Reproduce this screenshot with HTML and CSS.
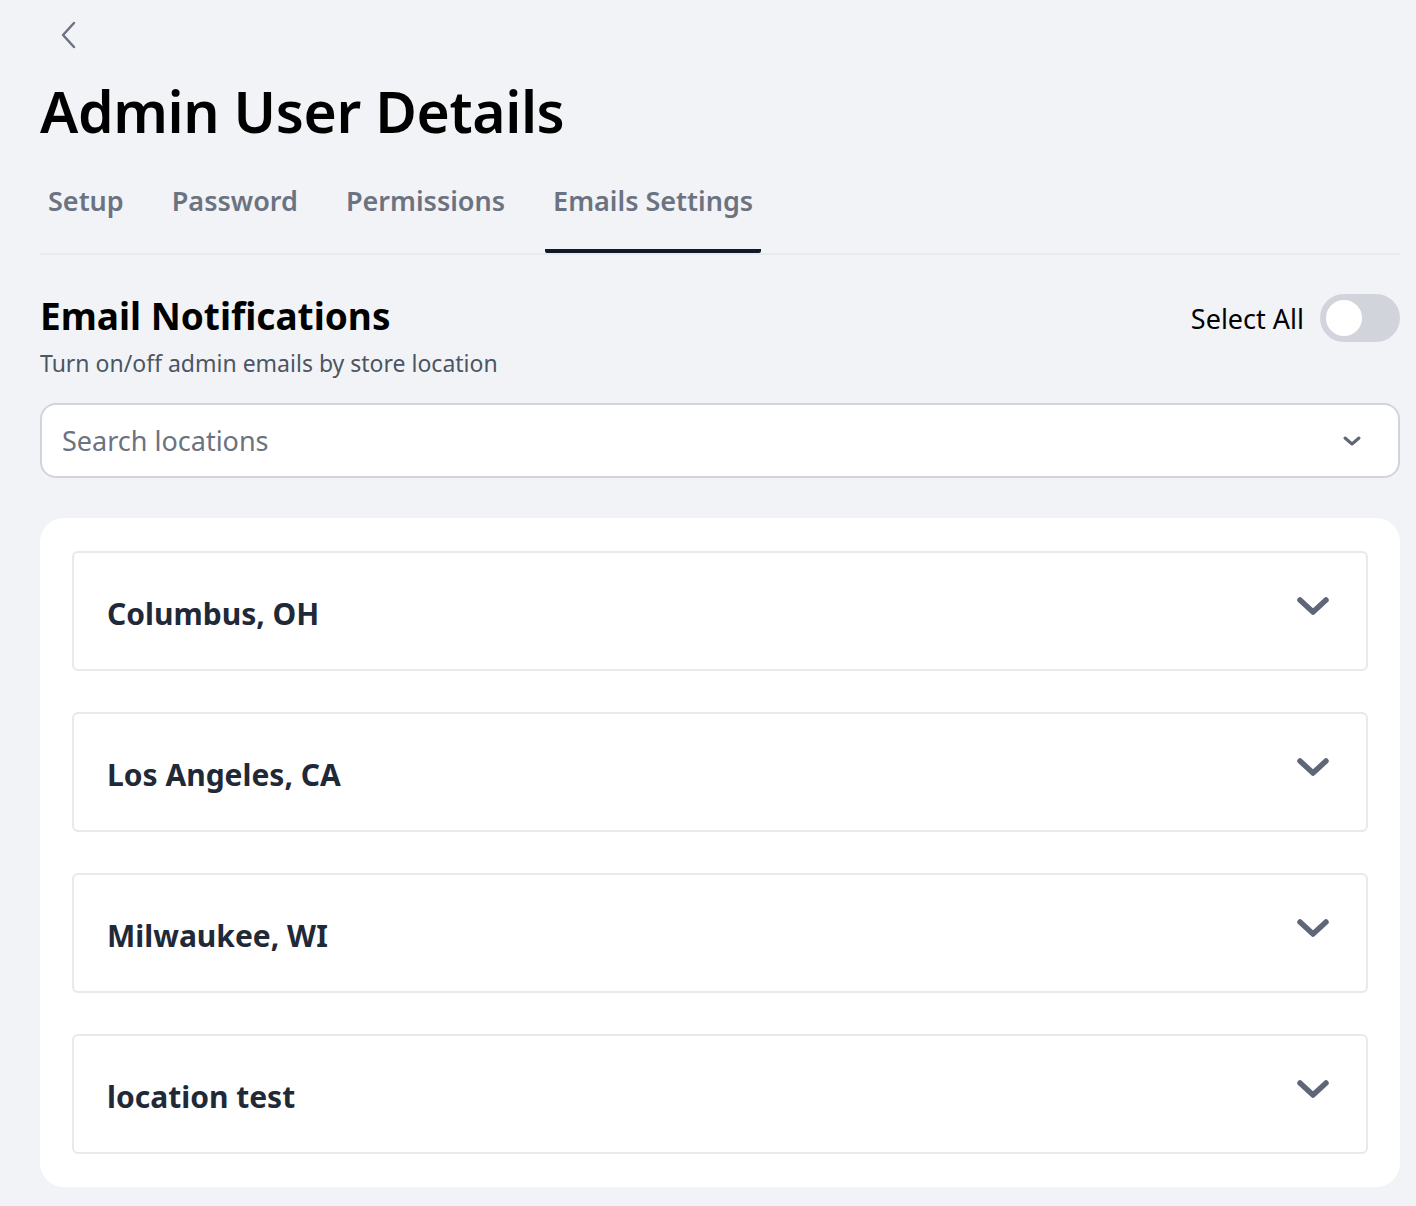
FILE: index.html
```html
<!DOCTYPE html>
<html lang="en">
<head>
    <meta charset="UTF-8">
    <meta name="viewport" content="width=device-width, initial-scale=1.0">
    <title>Admin User Details</title>
    <link rel="stylesheet" href="styles.css">
</head>
<body>
<div class="page">
    <button class="back-button" aria-label="Back">
        <svg width="22" height="32" viewBox="0 0 22 32" fill="none">
            <path d="M16 4 L5 16 L16 28" stroke="#6b7280" stroke-width="2.5" stroke-linecap="round" stroke-linejoin="round"/>
        </svg>
    </button>

    <h1 class="title">Admin User Details</h1>

    <nav class="tabs">
        <a class="tab">Setup</a>
        <a class="tab">Password</a>
        <a class="tab">Permissions</a>
        <a class="tab active">Emails Settings</a>
    </nav>

    <section class="section-header">
        <div>
            <h2 class="section-title">Email Notifications</h2>
            <p class="section-subtitle">Turn on/off admin emails by store location</p>
        </div>
        <label class="select-all">
            <span>Select All</span>
            <span class="toggle"><span class="knob"></span></span>
        </label>
    </section>

    <div class="search">
        <input type="text" placeholder="Search locations" spellcheck="false">
        <svg class="search-chevron" width="20" height="12" viewBox="0 0 20 12" fill="none">
            <path d="M3 3 L10 9 L17 3" stroke="#5f6678" stroke-width="3" stroke-linecap="round" stroke-linejoin="round"/>
        </svg>
    </div>

    <div class="locations">
        <div class="location">
            <span class="location-name">Columbus, OH</span>
            <svg class="location-chevron" width="34" height="22" viewBox="0 0 34 22" fill="none">
                <path d="M4 4 L17 16 L30 4" stroke="#5f6678" stroke-width="5.5" stroke-linecap="round" stroke-linejoin="round"/>
            </svg>
        </div>
        <div class="location">
            <span class="location-name">Los Angeles, CA</span>
            <svg class="location-chevron" width="34" height="22" viewBox="0 0 34 22" fill="none">
                <path d="M4 4 L17 16 L30 4" stroke="#5f6678" stroke-width="5.5" stroke-linecap="round" stroke-linejoin="round"/>
            </svg>
        </div>
        <div class="location">
            <span class="location-name">Milwaukee, WI</span>
            <svg class="location-chevron" width="34" height="22" viewBox="0 0 34 22" fill="none">
                <path d="M4 4 L17 16 L30 4" stroke="#5f6678" stroke-width="5.5" stroke-linecap="round" stroke-linejoin="round"/>
            </svg>
        </div>
        <div class="location">
            <span class="location-name">location test</span>
            <svg class="location-chevron" width="34" height="22" viewBox="0 0 34 22" fill="none">
                <path d="M4 4 L17 16 L30 4" stroke="#5f6678" stroke-width="5.5" stroke-linecap="round" stroke-linejoin="round"/>
            </svg>
        </div>
    </div>
</div>
</body>
</html>
```

FILE: styles.css
```css
:root {
    --background: #f2f3f7;
    --text: #000000;
    --text-dark: #1f2937;
    --tab-active: #111827;
    --text-secondary: #4b5563;
    --muted: #6b7280;
    --border: #e8e9ee;
    --border-strong: #d1d5db;
}

* {
    margin: 0;
    padding: 0;
    box-sizing: border-box;
}

body {
    font-family: "Noto Sans", "Open Sans", Arial, sans-serif;
    background-color: var(--background);
    color: var(--text);
}

.page {
    padding: 16px 16px 19px 40px;
}

.back-button {
    display: block;
    background: none;
    border: none;
    margin-left: 18px;
    height: 40px;
    cursor: pointer;
}

.title {
    font-size: 57px;
    font-weight: 600;
    line-height: 1;
    margin-top: 27px;
    letter-spacing: -0.4px;
}

.tabs {
    display: flex;
    gap: 32px;
    margin-top: 42px;
    border-bottom: 2px solid var(--border);
}

.tab {
    font-size: 27px;
    font-weight: 600;
    color: var(--muted);
    padding: 0 8px 30px;
    border-bottom: 4px solid transparent;
    cursor: pointer;
}

.tab.active {
    border-bottom-color: var(--tab-active);
    border-radius: 2px;
}

.section-header {
    display: flex;
    justify-content: space-between;
    align-items: flex-start;
    margin-top: 39px;
}

.section-title {
    font-size: 37px;
    font-weight: 700;
    line-height: 1.2;
}

.section-subtitle {
    font-size: 23px;
    color: var(--text-secondary);
    margin-top: 9px;
}

.select-all {
    display: flex;
    align-items: center;
    gap: 16px;
    font-size: 27px;
    cursor: pointer;
}

.toggle {
    width: 80px;
    height: 48px;
    border-radius: 24px;
    background-color: var(--border-strong);
    padding: 6px;
    display: flex;
}

.knob {
    width: 36px;
    height: 36px;
    border-radius: 50%;
    background-color: white;
}

.search {
    display: flex;
    align-items: center;
    margin-top: 24px;
    background-color: white;
    border: 2px solid var(--border-strong);
    border-radius: 16px;
    height: 75px;
    padding: 0 36px 0 20px;
}

.search input {
    flex: 1;
    border: none;
    outline: none;
    font-family: inherit;
    font-size: 27px;
    color: var(--text-dark);
    background: transparent;
}

.search input::placeholder {
    color: var(--muted);
}

.locations {
    margin-top: 40px;
    background-color: white;
    border-radius: 24px;
    padding: 33px 32px;
    display: flex;
    flex-direction: column;
    gap: 41px;
}

.location {
    display: flex;
    align-items: center;
    justify-content: space-between;
    height: 120px;
    border: 2px solid var(--border);
    border-radius: 6px;
    padding: 0 36px 0 33px;
}

.location-name {
    font-size: 30px;
    font-weight: 700;
    color: var(--text-dark);
    margin-top: 4px;
}

.location-chevron {
    margin-bottom: 8px;
}
```
